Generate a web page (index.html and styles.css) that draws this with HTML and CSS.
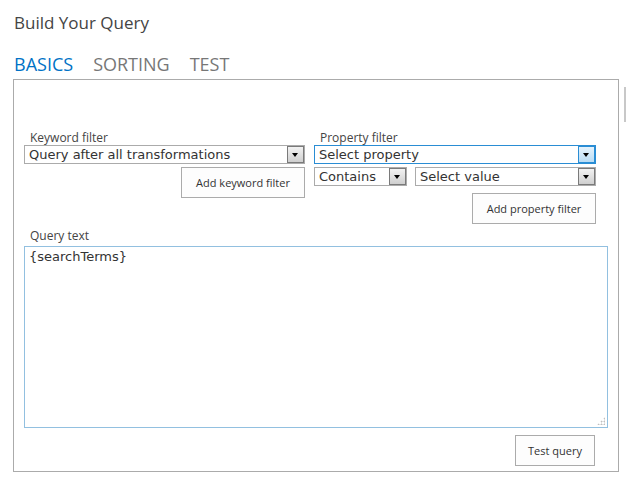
FILE: index.html
```html
<!DOCTYPE html>
<html>
<head>
<meta charset="utf-8">
<link rel="stylesheet" href="styles.css">
</head>
<body>
<div class="page">
  <h1 class="title">Build Your Query</h1>
  <div class="tabs">
    <span class="tab active">BASICS</span>
    <span class="tab">SORTING</span>
    <span class="tab">TEST</span>
  </div>
  <div class="panel">
    <div class="filters">
      <div class="col">
        <div class="label">Keyword filter</div>
        <div class="select wide"><span class="value">Query after all transformations</span><span class="arrow"></span></div>
        <div class="btn-row"><button class="btn kw">Add keyword filter</button></div>
      </div>
      <div class="col">
        <div class="label">Property filter</div>
        <div class="select wide focus"><span class="value">Select property</span><span class="arrow"></span></div>
        <div class="pair">
          <div class="select op"><span class="value">Contains</span><span class="arrow"></span></div>
          <div class="select val"><span class="value">Select value</span><span class="arrow"></span></div>
        </div>
        <div class="btn-row"><button class="btn pf">Add property filter</button></div>
      </div>
    </div>
    <div class="query">
      <div class="label">Query text</div>
      <div class="textarea">{searchTerms}<span class="grip"></span></div>
      <div class="btn-row test"><button class="btn tq">Test query</button></div>
    </div>
  </div>
  <div class="scrollthumb"></div>
</div>
</body>
</html>
```

FILE: styles.css
```css
html, body {
  margin: 0;
  padding: 0;
  background: #ffffff;
}
body {
  font-family: "Open Sans", "Noto Sans", sans-serif;
  color: #444444;
}
.page {
  position: relative;
  width: 626px;
  height: 480px;
  overflow: hidden;
}
.title {
  margin: 0;
  padding: 12px 0 0 14px;
  font-size: 17px;
  font-weight: normal;
  line-height: 22px;
  color: #444444;
}
.tabs {
  display: flex;
  gap: 20px;
  padding: 18px 0 0 14px;
  height: 24px;
}
.tab {
  font-size: 18px;
  line-height: 24px;
  color: #777777;
}
.tab.active {
  color: #0072c6;
}
.panel {
  box-sizing: border-box;
  margin: 3px 0 0 13px;
  width: 606px;
  height: 393px;
  border: 1px solid #ababab;
  padding: 50px 0 0 10px;
}
.filters {
  display: flex;
  gap: 9px;
}
.col {
  width: 282px;
  display: flex;
  flex-direction: column;
}
.col:first-child {
  width: 281px;
}
.label {
  font-size: 12px;
  line-height: 15px;
  padding-left: 6px;
  color: #444444;
}
.select {
  box-sizing: border-box;
  height: 19px;
  border: 1px solid #ababab;
  display: flex;
  align-items: center;
  background: #fff;
  font-family: "DejaVu Sans", Verdana, sans-serif;
  font-size: 13px;
  color: #333333;
}
.select.focus {
  border-color: #2a8dd4;
}
.value {
  flex: 1;
  padding-left: 4px;
  white-space: nowrap;
  overflow: hidden;
  line-height: 17px;
}
.arrow {
  box-sizing: border-box;
  width: 17px;
  height: 17px;
  border: 1px solid #7a7a7a;
  background: linear-gradient(#f2f2f2, #cfcfcf);
  position: relative;
}
.arrow::after {
  content: "";
  position: absolute;
  left: 4px;
  top: 6px;
  border-left: 3.5px solid transparent;
  border-right: 3.5px solid transparent;
  border-top: 4px solid #000;
}
.select.focus .arrow {
  border-color: #2a8dd4;
  background: linear-gradient(#e5f3fc, #b9dcf5);
}
.pair {
  display: flex;
  gap: 8px;
  margin-top: 3px;
}
.select.op {
  width: 93px;
}
.select.val {
  width: 181px;
}
.btn-row {
  display: flex;
  justify-content: flex-end;
}
.btn {
  box-sizing: border-box;
  height: 31px;
  border: 1px solid #ababab;
  background: #fdfdfd;
  font-family: "Open Sans", "Noto Sans", sans-serif;
  font-size: 11px;
  color: #333333;
  padding: 0;
  margin: 0;
}
.btn.kw {
  width: 124px;
  margin-top: 3px;
}
.btn.pf {
  width: 124px;
  margin-top: 7px;
}
.query {
  width: 584px;
  margin-top: 4px;
}
.textarea {
  box-sizing: border-box;
  position: relative;
  margin-top: 3px;
  height: 182px;
  border: 1px solid #92c0e0;
  font-family: "DejaVu Sans", Verdana, sans-serif;
  font-size: 13px;
  color: #333333;
  padding: 1px 4px;
  line-height: 17px;
}
.grip {
  position: absolute;
  right: 2px;
  bottom: 2px;
  width: 8px;
  height: 8px;
  background:
    radial-gradient(circle, #c0c0c0 0.9px, transparent 1.1px) 0 0 / 3px 3px;
  clip-path: polygon(100% 0, 100% 100%, 0 100%);
}
.btn-row.test {
  padding-right: 13px;
  margin-top: 7px;
}
.btn.tq {
  width: 80px;
}
.scrollthumb {
  position: absolute;
  left: 624px;
  top: 87px;
  width: 2px;
  height: 35px;
  background: #c8c8c8;
}
```
